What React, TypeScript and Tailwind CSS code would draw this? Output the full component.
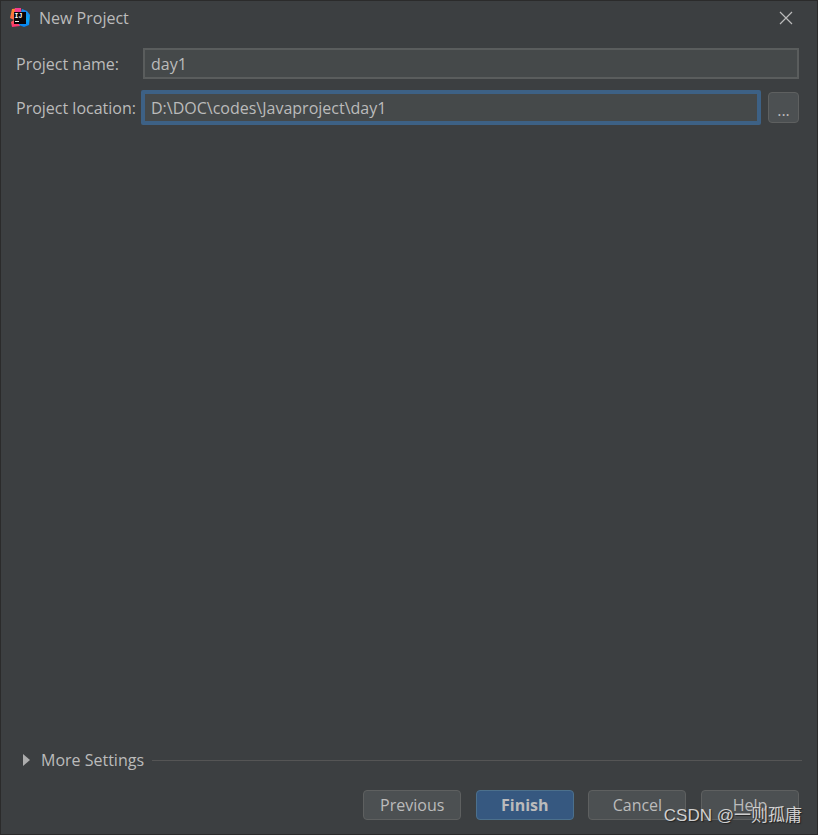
import { useState } from 'react';

const buttonBase = 'flex h-[30px] w-[98px] items-center justify-center rounded-[4px] border';

function IdeaLogo() {
  return (
    <svg width="20" height="20" viewBox="0 0 20 20" className="shrink-0">
      <defs>
        <linearGradient id="warm" x1="0" y1="0" x2="0" y2="1">
          <stop offset="0" stopColor="#fc8a2a" />
          <stop offset="0.55" stopColor="#fb6a48" />
          <stop offset="1" stopColor="#fe2c76" />
        </linearGradient>
        <linearGradient id="cool" x1="0" y1="0" x2="0" y2="1">
          <stop offset="0" stopColor="#1c7dea" />
          <stop offset="0.6" stopColor="#0aa6f2" />
          <stop offset="1" stopColor="#087cf0" />
        </linearGradient>
      </defs>
      <path d="M2 1L10 0L12 5L10 18L2 19L1 14L4 12L0 10Z" fill="url(#warm)" />
      <path d="M5 0L11 0L11 5L4 10Z" fill="#f43c8c" />
      <path d="M12 1L17 3L20 7L19 17L14 19L9 17L11 4Z" fill="url(#cool)" />
      <rect x="4" y="4" width="12" height="12" fill="#080407" />
      <text x="4.6" y="10" fill="#fff" fontSize="6.5" fontWeight="bold" fontFamily="Liberation Mono, monospace">IJ</text>
      <rect x="5" y="13" width="4" height="1" fill="#eee" />
    </svg>
  );
}

export default function App() {
  const [name, setName] = useState('day1');
  const [location, setLocation] = useState('D:\\DOC\\codes\\Javaproject\\day1');

  return (
    <div className="relative flex h-[835px] w-[818px] flex-col overflow-hidden border border-[#2b2b2b] bg-[#3c3f41] font-['Open_Sans',sans-serif] text-[16px] leading-[22px] text-[#bbbbbb]">
      {/* Title bar */}
      <header className="flex h-[34px] shrink-0 items-center pl-[9px] pr-[24px]">
        <IdeaLogo />
        <h1 className="ml-[9px] flex-1 text-[16px]">New Project</h1>
        <button title="Close" className="flex h-[14px] w-[14px] items-center justify-center">
          <svg width="14" height="14" viewBox="0 0 14 14" stroke="#bbbbbb" strokeWidth="1.2">
            <path d="M1 1L13 13M13 1L1 13" />
          </svg>
        </button>
      </header>

      {/* Project fields */}
      <div className="mt-[13px] flex h-[31px] shrink-0 items-center pl-[15px] pr-[18px]">
        <label htmlFor="name" className="w-[127px] shrink-0 whitespace-nowrap">Project name:</label>
        <input
          id="name"
          value={name}
          onChange={(e) => setName(e.target.value)}
          className="h-[31px] min-w-0 flex-1 border-2 border-[#5a5d5d] bg-[#45494a] px-[6px] outline-none"
        />
      </div>
      <div className="mt-[11px] flex h-[35px] shrink-0 items-center pl-[15px] pr-[18px]">
        <label htmlFor="location" className="w-[125px] shrink-0 whitespace-nowrap">Project location:</label>
        <input
          id="location"
          value={location}
          onChange={(e) => setLocation(e.target.value)}
          className="h-[35px] min-w-0 flex-1 rounded-[2px] border-4 border-[#3d6185] bg-[#45494a] px-[6px] outline-none"
        />
        <button className="ml-[7px] h-[31px] w-[31px] rounded-[4px] border border-[#5e6060] bg-[#4c5052] pt-[5px]">...</button>
      </div>

      <div className="flex-1" />

      {/* Collapsed section */}
      <div className="flex h-[24px] shrink-0 items-center pl-[22px] pr-[15px]">
        <svg width="7" height="12" viewBox="0 0 7 12" className="shrink-0">
          <path d="M0 0L7 6L0 12Z" fill="#adadad" />
        </svg>
        <span className="ml-[11px] w-[111px] whitespace-nowrap">More Settings</span>
        <div className="mt-px h-px flex-1 bg-[#555555]" />
      </div>

      <footer className="mb-[14px] mt-[18px] flex shrink-0 justify-end gap-[14.6px] pr-[18px]">
        <button className={`${buttonBase} border-[#5e6060] bg-[#4c5052]`}>Previous</button>
        <button className={`${buttonBase} border-[#4c708c] bg-[#365880] font-bold`}>Finish</button>
        <button className={`${buttonBase} border-[#5e6060] bg-[#4c5052]`}>Cancel</button>
        <button className={`${buttonBase} border-[#5e6060] bg-[#4c5052]`}>Help</button>
      </footer>

      {/* Watermark over the footer */}
      <div className="pointer-events-none absolute bottom-[6px] right-[15px] whitespace-nowrap font-['Liberation_Sans','Noto_Sans_CJK_SC',sans-serif] text-[17px] leading-[24px] text-[#d0d0d0] [text-shadow:1px_1px_1px_#222]">
        CSDN @一则孤庸
      </div>
    </div>
  );
}
